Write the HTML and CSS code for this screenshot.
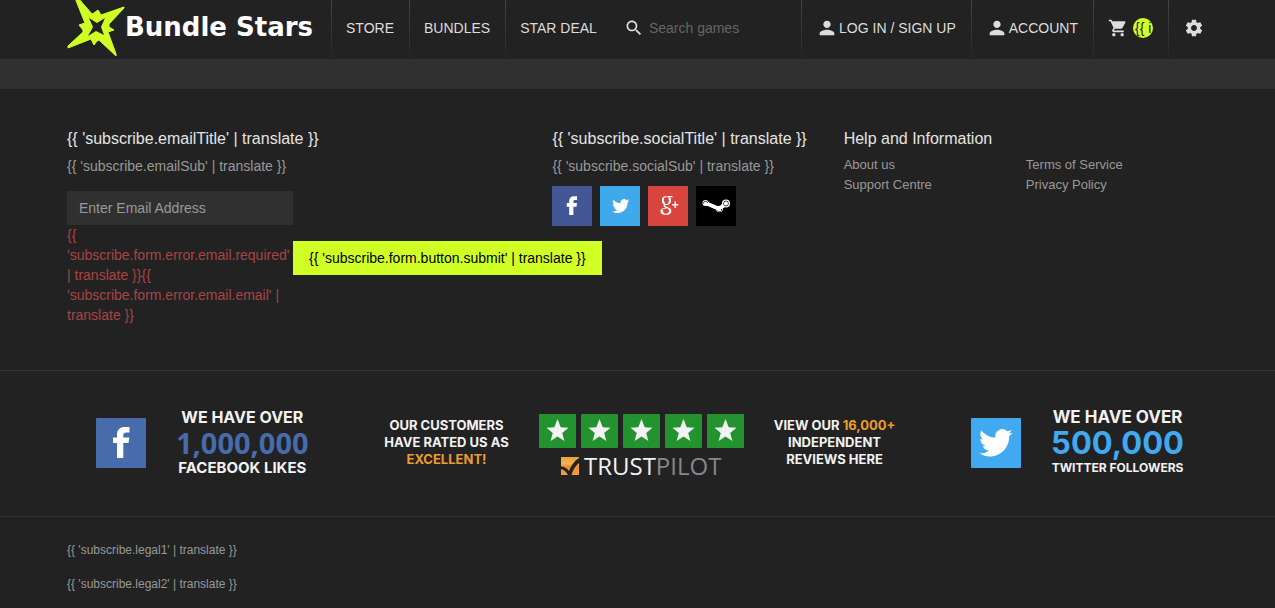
FILE: index.html
```html
<!DOCTYPE html>
<html lang="en">
  <head>
    <meta charset="UTF-8" />
    <meta name="viewport" content="width=device-width, initial-scale=1.0" />
    <title>Bundle Stars</title>
    <link rel="stylesheet" href="styles.css">
  </head>
  <body>
    <header class="header">
      <div class="container header-inner">
        <a href="#" class="logo">
          <svg class="logo-star" viewBox="0 0 58 58" aria-hidden="true">
            <path fill="#d0ff26" stroke="#d0ff26" stroke-linejoin="round" d="M8 -2L12 -1L25 14L27 13L31 10L34 15L57 7L57 8L42 24L42 27L47 30L41 32L49 54L49 56L32 40L30 41L27 45L24 39L1 48L1 46L16 32L16 30L12 25L18 23Z" />
            <path fill="#222" d="M22 18L30 23L38 18L34 27L37 35L29 31L21 36L26 27Z" />
          </svg>
          <span>Bundle Stars</span>
        </a>
        <nav class="nav">
          <a href="#" class="nav-item">STORE</a>
          <a href="#" class="nav-item">BUNDLES</a>
          <a href="#" class="nav-item">STAR DEAL</a>
        </nav>
        <form class="search">
          <label for="search" aria-label="Search games">
            <svg class="icon" viewBox="0 0 24 24"><path d="M15.5 14h-.79l-.28-.27C15.41 12.59 16 11.11 16 9.5 16 5.91 13.09 3 9.5 3S3 5.91 3 9.5 5.91 16 9.5 16c1.61 0 3.09-.59 4.23-1.57l.27.28v.79l5 4.99L20.49 19l-4.99-5zm-6 0C7.01 14 5 11.99 5 9.5S7.01 5 9.5 5 14 7.01 14 9.5 11.99 14 9.5 14z" /></svg>
          </label>
          <input type="text" id="search" placeholder="Search games" />
        </form>
        <nav class="nav">
          <a href="#" class="nav-item">
            <svg class="icon icon-user" viewBox="0 0 24 24"><path d="M12 12c2.21 0 4-1.79 4-4s-1.79-4-4-4-4 1.79-4 4 1.79 4 4 4zm0 2c-2.67 0-8 1.34-8 4v2h16v-2c0-2.66-5.33-4-8-4z" /></svg>
            LOG IN / SIGN UP
          </a>
          <a href="#" class="nav-item">
            <svg class="icon icon-user" viewBox="0 0 24 24"><path d="M12 12c2.21 0 4-1.79 4-4s-1.79-4-4-4-4 1.79-4 4 1.79 4 4 4zm0 2c-2.67 0-8 1.34-8 4v2h16v-2c0-2.66-5.33-4-8-4z" /></svg>
            ACCOUNT
          </a>
          <a href="#" class="nav-item nav-cart" aria-label="Cart">
            <svg class="icon" viewBox="0 0 24 24"><path d="M7 18c-1.1 0-1.99.9-1.99 2S5.9 22 7 22s2-.9 2-2-.9-2-2-2zM1 2v2h2l3.6 7.59-1.35 2.45c-.16.28-.25.61-.25.96 0 1.1.9 2 2 2h12v-2H7.42c-.14 0-.25-.11-.25-.25l.03-.12.9-1.63h7.45c.75 0 1.41-.41 1.75-1.03l3.58-6.49c.08-.14.12-.31.12-.48 0-.55-.45-1-1-1H5.21l-.94-2H1zm16 16c-1.1 0-1.99.9-1.99 2s.89 2 1.99 2 2-.9 2-2-.9-2-2-2z" /></svg>
            <span class="badge">{{ i</span>
          </a>
          <a href="#" class="nav-item nav-settings" aria-label="Settings">
            <svg class="icon" viewBox="0 0 24 24"><path d="M19.43 12.98c.04-.32.07-.64.07-.98s-.03-.66-.07-.98l2.11-1.65c.19-.15.24-.42.12-.64l-2-3.46c-.12-.22-.39-.3-.61-.22l-2.49 1c-.52-.4-1.08-.73-1.69-.98l-.38-2.65C14.46 2.18 14.25 2 14 2h-4c-.25 0-.46.18-.49.42l-.38 2.65c-.61.25-1.17.59-1.69.98l-2.49-1c-.23-.09-.49 0-.61.22l-2 3.46c-.13.22-.07.49.12.64l2.11 1.65c-.04.32-.07.65-.07.98s.03.66.07.98l-2.11 1.65c-.19.15-.24.42-.12.64l2 3.46c.12.22.39.3.61.22l2.49-1c.52.4 1.08.73 1.69.98l.38 2.65c.03.24.24.42.49.42h4c.25 0 .46-.18.49-.42l.38-2.65c.61-.25 1.17-.59 1.69-.98l2.49 1c.23.09.49 0 .61-.22l2-3.46c.12-.22.07-.49-.12-.64l-2.11-1.65zM12 15.5c-1.93 0-3.5-1.57-3.5-3.5s1.57-3.5 3.5-3.5 3.5 1.57 3.5 3.5-1.57 3.5-3.5 3.5z" /></svg>
          </a>
        </nav>
      </div>
    </header>

    <main class="content"></main>

    <footer>
      <div class="container subscribe">
        <section class="subscribe-email">
          <h4>{{ 'subscribe.emailTitle' | translate }}</h4>
          <p class="sub">{{ 'subscribe.emailSub' | translate }}</p>
          <form class="email-form">
            <div class="field">
              <input type="email" id="email" placeholder="Enter Email Address" aria-label="Email address" />
              <label for="email" class="error">{{ 'subscribe.form.error.email.required' | translate }}{{ 'subscribe.form.error.email.email' | translate }}</label>
            </div>
            <button type="submit">{{ 'subscribe.form.button.submit' | translate }}</button>
          </form>
        </section>

        <section class="subscribe-social">
          <h4>{{ 'subscribe.socialTitle' | translate }}</h4>
          <p class="sub">{{ 'subscribe.socialSub' | translate }}</p>
          <div class="social">
            <a href="#" class="tile facebook" aria-label="Facebook">
              <svg viewBox="0 0 40 40"><path d="M17.200 29V20.800H14.800V17H17.200V15C17.200 12 19 10.300 22 10.300H25V14H23C21.800 14 21.400 14.500 21.400 15.500V17H25L24.500 20.800H21.400V29Z" /></svg>
            </a>
            <a href="#" class="tile twitter" aria-label="Twitter">
              <svg viewBox="-17 -16 56 56"><path d="M23.953 4.57a10 10 0 01-2.825.775 4.958 4.958 0 002.163-2.723c-.951.555-2.005.959-3.127 1.184a4.92 4.92 0 00-8.384 4.482C7.69 8.095 4.067 6.13 1.64 3.162a4.822 4.822 0 00-.666 2.475c0 1.71.87 3.213 2.188 4.096a4.904 4.904 0 01-2.228-.616v.06a4.923 4.923 0 003.946 4.827 4.996 4.996 0 01-2.212.085 4.936 4.936 0 004.604 3.417 9.867 9.867 0 01-6.102 2.105c-.39 0-.779-.023-1.17-.067a13.995 13.995 0 007.557 2.209c9.053 0 13.998-7.496 13.998-13.985 0-.21 0-.42-.015-.63A9.935 9.935 0 0024 4.59z" /></svg>
            </a>
            <a href="#" class="tile google" aria-label="Google Plus">
              <svg viewBox="0 0 40 40">
                <path fill="none" stroke="#fff" stroke-width="1.200" d="M24.500 10.600H18.500M21 11C23 13 22.800 18.500 18.500 18.500C13.500 18.500 13 11 18 10.600M17 18.500C14.500 20.500 18 21 20 22C25 24.500 22.500 28.300 18 28.300C11.500 28.300 11 22.500 18.500 22" />
                <path fill="none" stroke="#fff" stroke-width="1.800" d="M15.500 12.500C14.500 14 15 16.500 16.500 17.500M21 12C22.500 14 22 16.500 20.500 17.500M21 22.500C23 24.500 22 27 20 27.700M14.500 24C13.500 25.500 14.500 27 16 27.700" />
                <path d="M26.500 15.500H28V18H30.300V19.500H28V22H26.500V19.500H24.200V18H26.500Z" />
              </svg>
            </a>
            <a href="#" class="tile steam" aria-label="Steam">
              <svg viewBox="0 0 40 40">
                <path stroke="#fff" stroke-width="4" fill="none" stroke-linecap="round" d="M9.500 17L23.500 23L29 18" />
                <circle cx="9.500" cy="17" r="3" />
                <circle cx="23.500" cy="23" r="3.300" />
                <circle cx="30" cy="17.500" r="4" />
                <circle cx="30" cy="17.500" r="2.500" fill="none" stroke="#000" stroke-width="0.700" />
                <path stroke="#000" stroke-width="0.700" fill="none" d="M7.500 17.500A2 2 0 0 1 11.500 17M21.500 24.500A2 2 0 0 0 25.500 23" />
              </svg>
            </a>
          </div>
        </section>

        <section class="help">
          <h4>Help and Information</h4>
          <ul>
            <li><a href="#">About us</a></li>
            <li><a href="#">Terms of Service</a></li>
            <li><a href="#">Support Centre</a></li>
            <li><a href="#">Privacy Policy</a></li>
          </ul>
        </section>
      </div>

      <div class="trust">
        <div class="container trust-inner">
          <a href="#" class="stat">
            <svg class="stat-icon" viewBox="0 0 50 50">
              <rect width="50" height="50" rx="1" fill="#476bab" />
              <path fill="#fff" d="M21 40V25H17V19.500H21V16.500C21 11.500 24 9 29 9H33.500V14.500H30.500C28 14.500 27.300 15.500 27.300 17V19.500H33.300L32.500 25H27.300V40Z" />
            </svg>
            <span class="stat-text">
              <span>WE HAVE OVER</span>
              <strong class="likes">1,000,000</strong>
              <span class="caption">FACEBOOK LIKES</span>
            </span>
          </a>

          <a href="#" class="trustpilot">
            <span class="quote">OUR CUSTOMERS<br />HAVE RATED US AS<br /><em>EXCELLENT!</em></span>
            <span class="rating">
              <span class="stars">
                <svg viewBox="0 0 37 34"><rect width="37" height="34" rx="1" /><path d="M18.500 5L21.700 13.200L29.500 13.700L23.200 19L25.400 27L18.500 22.500L11.600 27L13.800 19L7.500 13.700L15.300 13.200Z" /></svg>
                <svg viewBox="0 0 37 34"><rect width="37" height="34" rx="1" /><path d="M18.500 5L21.700 13.200L29.500 13.700L23.200 19L25.400 27L18.500 22.500L11.600 27L13.800 19L7.500 13.700L15.300 13.200Z" /></svg>
                <svg viewBox="0 0 37 34"><rect width="37" height="34" rx="1" /><path d="M18.500 5L21.700 13.200L29.500 13.700L23.200 19L25.400 27L18.500 22.500L11.600 27L13.800 19L7.500 13.700L15.300 13.200Z" /></svg>
                <svg viewBox="0 0 37 34"><rect width="37" height="34" rx="1" /><path d="M18.500 5L21.700 13.200L29.500 13.700L23.200 19L25.400 27L18.500 22.500L11.600 27L13.800 19L7.500 13.700L15.300 13.200Z" /></svg>
                <svg viewBox="0 0 37 34"><rect width="37" height="34" rx="1" /><path d="M18.500 5L21.700 13.200L29.500 13.700L23.200 19L25.400 27L18.500 22.500L11.600 27L13.800 19L7.500 13.700L15.300 13.200Z" /></svg>
              </span>
              <span class="brand">
                <svg viewBox="0 0 18 18">
                  <defs>
                    <linearGradient id="orange" x1="0" y1="0" x2="0" y2="1">
                      <stop offset="0" stop-color="#f0a030" />
                      <stop offset="0.400" stop-color="#f7b45c" />
                      <stop offset="0.500" stop-color="#ee8f22" />
                      <stop offset="1" stop-color="#f0a040" />
                    </linearGradient>
                  </defs>
                  <rect width="18" height="18" fill="url(#orange)" />
                  <path fill="#222" d="M0 9.500C3 9.500 6 11 8 14C10 9 13 4 18 1V6C14 9 12 13 10.500 18H7C5 14.500 3 12.500 0 12Z" />
                </svg>
                <span>TRUST<i>PILOT</i></span>
              </span>
            </span>
            <span class="quote">VIEW OUR <em>16,000+</em><br />INDEPENDENT<br />REVIEWS HERE</span>
          </a>

          <a href="#" class="stat">
            <svg class="stat-icon" viewBox="0 0 50 50">
              <rect width="50" height="50" rx="1" fill="#40a9f0" />
              <path fill="#fff" transform="translate(8 8) scale(1.400)" d="M23.953 4.57a10 10 0 01-2.825.775 4.958 4.958 0 002.163-2.723c-.951.555-2.005.959-3.127 1.184a4.92 4.92 0 00-8.384 4.482C7.69 8.095 4.067 6.13 1.64 3.162a4.822 4.822 0 00-.666 2.475c0 1.71.87 3.213 2.188 4.096a4.904 4.904 0 01-2.228-.616v.06a4.923 4.923 0 003.946 4.827 4.996 4.996 0 01-2.212.085 4.936 4.936 0 004.604 3.417 9.867 9.867 0 01-6.102 2.105c-.39 0-.779-.023-1.17-.067a13.995 13.995 0 007.557 2.209c9.053 0 13.998-7.496 13.998-13.985 0-.21 0-.42-.015-.63A9.935 9.935 0 0024 4.59z" />
            </svg>
            <span class="stat-text large">
              <span>WE HAVE OVER</span>
              <strong class="followers">500,000</strong>
              <span class="caption">TWITTER FOLLOWERS</span>
            </span>
          </a>
        </div>
      </div>

      <div class="container legal">
        <p>{{ 'subscribe.legal1' | translate }}</p>
        <p>{{ 'subscribe.legal2' | translate }}</p>
      </div>
    </footer>
  </body>
</html>
```

FILE: styles.css
```css
* {
  box-sizing: border-box;
}
body {
  margin: 0;
  background-color: #222;
  color: #999;
  font-family: "Liberation Sans", Arial, sans-serif;
  font-size: 14px;
  line-height: 20px;
}
a {
  color: inherit;
  text-decoration: none;
}
h4,
p,
ul {
  margin: 0;
  padding: 0;
}
input,
button {
  font: inherit;
  border: 0;
  border-radius: 0;
}
svg {
  display: block;
  flex-shrink: 0;
}
.container {
  max-width: 1141px;
  margin: 0 auto;
}

/* header */
.header-inner {
  display: flex;
  height: 59px;
}
.logo {
  display: flex;
  width: 264px;
  color: #fff;
  font-family: "DejaVu Sans", sans-serif;
  font-size: 26px;
  font-weight: bold;
  line-height: 54px;
  white-space: nowrap;
}
.logo-star {
  width: 58px;
  height: 58px;
}
.nav {
  display: flex;
}
.nav-item {
  display: flex;
  align-items: center;
  padding: 0 15px 4px 14px;
  border-left: 1px solid;
  border-image: linear-gradient(#444, #262626) 1;
  color: #ddd;
  white-space: nowrap;
}
.icon {
  width: 20px;
  height: 20px;
  fill: #ddd;
}
.icon-user {
  width: 22px;
  height: 22px;
  margin-right: 1px;
}
.search {
  flex: 1;
  display: flex;
  align-items: center;
  gap: 5px;
  padding: 0 12px 3px;
  min-width: 0;
}
.search input {
  width: 100%;
  min-width: 0;
  padding: 0;
  background: none;
  color: #ddd;
}
.search input::placeholder {
  color: #666;
}
.nav-cart {
  gap: 5px;
}
.nav-settings {
  padding-left: 15px;
  padding-right: 4px;
}
.badge {
  width: 20px;
  height: 20px;
  padding-left: 2px;
  border-radius: 50%;
  background-color: #d0ff26;
  color: #222;
  overflow: hidden;
}
.content {
  height: 30px;
  background-color: #303030;
}

/* subscribe */
.subscribe {
  display: grid;
  grid-template-columns: repeat(12, minmax(0, 1fr));
  column-gap: 24px;
  padding: 40px 0 45px;
}
.subscribe-email {
  grid-column: span 5;
}
.subscribe-social {
  grid-column: span 3;
}
.help {
  grid-column: span 4;
}
h4 {
  margin-bottom: 6px;
  color: #e4e4e4;
  font-size: 16px;
  font-weight: 500;
  white-space: nowrap;
}
.sub {
  padding: 1px 0 10px;
}
.email-form {
  display: flex;
  align-items: flex-start;
  padding-top: 5px;
}
.field {
  width: 226px;
  flex-shrink: 0;
}
.field input {
  display: block;
  width: 100%;
  height: 34px;
  padding: 0 12px;
  background-color: #303030;
  color: #ddd;
}
.field input::placeholder {
  color: #999;
}
.error {
  display: block;
  color: #a94442;
}
.email-form button {
  height: 34px;
  margin-top: 50px;
  padding: 0 16px;
  background-color: #d0ff26;
  color: #000;
  white-space: nowrap;
}
.social {
  display: flex;
  gap: 8px;
}
.tile {
  width: 40px;
  height: 40px;
  fill: #fff;
}
.facebook {
  background-color: #435797;
}
.twitter {
  background-color: #40a9ec;
}
.google {
  background-color: #d7453e;
}
.steam {
  background-color: #000;
}
.help ul {
  display: grid;
  grid-template-columns: 1fr 1fr;
  list-style: none;
  font-size: 13px;
}

/* trust */
.trust {
  border-top: 1px solid #333;
  border-bottom: 1px solid #333;
}
.trust-inner {
  display: flex;
  justify-content: space-between;
  align-items: center;
  height: 145px;
  padding: 0 24px 2px 29px;
  color: #f2f2f2;
  font-family: Inter, sans-serif;
  font-weight: 700;
  text-align: center;
  white-space: nowrap;
}
.stat,
.trustpilot {
  display: flex;
  align-items: center;
  gap: 30px;
}
.stat-icon {
  width: 50px;
  height: 50px;
}
.stat-text {
  display: flex;
  flex-direction: column;
  font-size: 16px;
  line-height: 20px;
}
.stat-text strong {
  font-weight: 700;
  line-height: 31px;
}
.stat-text .caption {
  font-size: 15px;
}
.large {
  font-size: 17px;
}
.large .caption {
  font-size: 12px;
}
.likes {
  color: #476bab;
  font-family: "Open Sans", sans-serif;
  font-size: 29px;
}
.followers {
  color: #40a9f0;
  font-size: 31px;
}
.quote {
  font-size: 13px;
  line-height: 17px;
}
.quote em {
  color: #eb9c2d;
  font-style: normal;
}
.rating {
  padding-top: 10px;
}
.stars {
  display: flex;
  gap: 5px;
}
.stars svg {
  width: 37px;
  height: 34px;
}
.stars rect {
  fill: #23932f;
}
.stars path {
  fill: #f2f2f2;
}
.brand {
  display: flex;
  justify-content: center;
  align-items: center;
  gap: 5px;
  padding-top: 3px;
  font-family: "Open Sans", sans-serif;
  font-size: 24px;
  font-weight: 400;
  line-height: 30px;
}
.brand svg {
  width: 18px;
  height: 18px;
}
.brand i {
  color: #87868b;
  font-style: normal;
}

/* legal */
.legal {
  display: flex;
  flex-direction: column;
  gap: 14px;
  padding: 23px 0 14px;
  font-size: 12px;
}
```
